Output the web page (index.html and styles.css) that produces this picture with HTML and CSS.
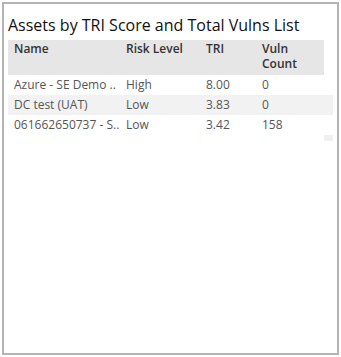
FILE: index.html
```html
<!DOCTYPE html>
<html>
<head>
<meta charset="utf-8">
<link rel="stylesheet" href="styles.css">
</head>
<body>
<div class="panel">
  <h1 class="title">Assets by TRI Score and Total Vulns List</h1>
  <div class="table">
    <div class="head">
      <div class="c name">Name</div>
      <div class="c risk">Risk Level</div>
      <div class="c tri">TRI</div>
      <div class="c vuln">Vuln Count</div>
    </div>
    <div class="row">
      <div class="c name">Azure - SE Demo ..</div>
      <div class="c risk">High</div>
      <div class="c tri">8.00</div>
      <div class="c vuln">0</div>
    </div>
    <div class="row alt">
      <div class="c name">DC test (UAT)</div>
      <div class="c risk">Low</div>
      <div class="c tri">3.83</div>
      <div class="c vuln">0</div>
    </div>
    <div class="row">
      <div class="c name">061662650737 - S..</div>
      <div class="c risk">Low</div>
      <div class="c tri">3.42</div>
      <div class="c vuln">158</div>
    </div>
    <div class="scroll"><span class="corner"></span></div>
  </div>
</div>
</body>
</html>
```
FILE: styles.css
```css
html, body { margin: 0; padding: 0; background: #fff; }
body { padding: 2px; font-family: "Open Sans", sans-serif; }
.panel {
  box-sizing: border-box;
  height: 353px;
  border: 2px solid #b3b3b3;
  padding: 0 4px;
}
.title {
  margin: 0;
  font-weight: 400;
  font-size: 16px;
  line-height: 20px;
  padding-top: 11px;
  padding-bottom: 5px;
  color: #111;
}
.table { width: 325px; font-size: 12px; }
.head {
  display: flex;
  width: 316px;
  background: #e6e6e6;
  color: #333;
  font-weight: 600;
  line-height: 15px;
  height: 35px;
  box-sizing: border-box;
  padding-top: 1px;
}
.row {
  display: flex;
  height: 20px;
  line-height: 20px;
  color: #555;
}
.row.alt { background: #f2f2f2; }
.c { padding-left: 6px; box-sizing: border-box; white-space: nowrap; }
.name { width: 112px; }
.risk { width: 80px; }
.tri { width: 56px; }
.vuln { width: 60px; white-space: normal; }
.scroll { display: flex; justify-content: flex-end; }
.corner { width: 9px; height: 6px; background: #f0f0f0; }
```
